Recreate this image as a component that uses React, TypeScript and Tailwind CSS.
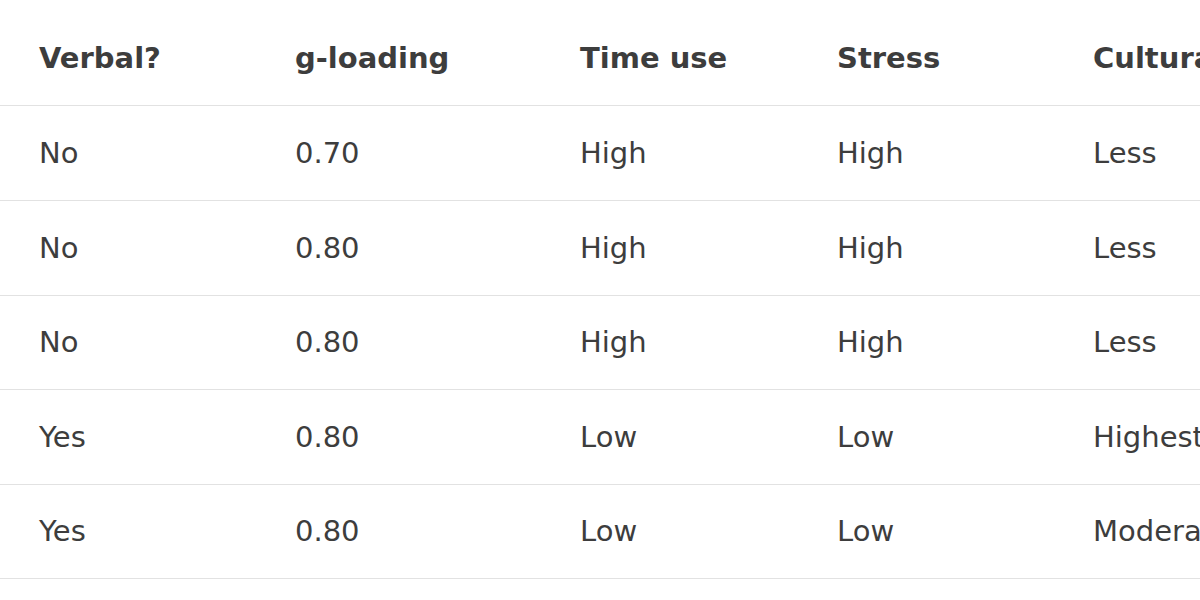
const cols = ['w-[256px]', 'w-[285px]', 'w-[257px]', 'w-[256px]', 'w-[300px]'];

const header = ['Verbal?', 'g-loading', 'Time use', 'Stress', 'Cultural load'];

const rows = [
    { h: 'h-[95px]', cells: ['No', '0.70', 'High', 'High', 'Less'] },
    { h: 'h-[95px]', cells: ['No', '0.80', 'High', 'High', 'Less'] },
    { h: 'h-[94px]', cells: ['No', '0.80', 'High', 'High', 'Less'] },
    { h: 'h-[95px]', cells: ['Yes', '0.80', 'Low', 'Low', 'Highest'] },
    { h: 'h-[94px]', cells: ['Yes', '0.80', 'Low', 'Low', 'Moderate'] },
];

export default function App() {
    return (
        <div
            className="w-[1200px] h-[600px] overflow-hidden bg-white text-[#3d3d3d] text-[29px] whitespace-nowrap"
            style={{ fontFamily: '"DejaVu Sans", Verdana, sans-serif' }}
        >
            <div className="flex h-[106px] pt-[12px] border-b border-[#e2e2e2] font-bold">
                {header.map((t, i) => (
                    <div key={t} className={`${cols[i]} shrink-0 pl-[39px] flex items-center`}>
                        {t}
                    </div>
                ))}
            </div>
            {rows.map((r, ri) => (
                <div key={ri} className={`flex ${r.h} pt-[1px] border-b border-[#e2e2e2]`}>
                    {r.cells.map((t, i) => (
                        <div key={i} className={`${cols[i]} shrink-0 pl-[39px] flex items-center`}>
                            {t}
                        </div>
                    ))}
                </div>
            ))}
        </div>
    );
}
